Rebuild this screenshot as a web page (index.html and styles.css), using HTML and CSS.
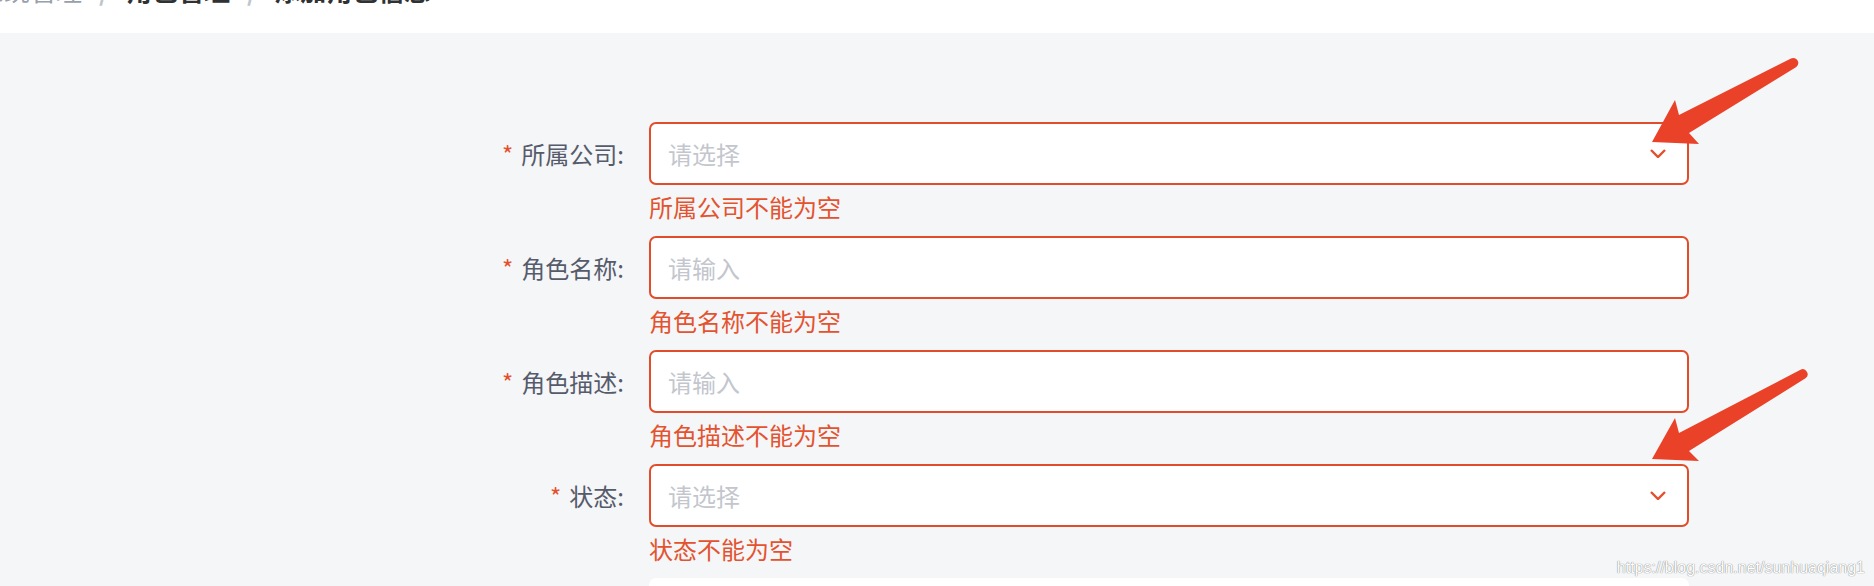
FILE: index.html
```html
<!DOCTYPE html>
<html lang="zh-CN">
<head>
    <meta charset="UTF-8">
    <meta name="viewport" content="width=device-width, initial-scale=1.0">
    <title>添加角色信息</title>
    <link rel="stylesheet" href="styles.css">
</head>

<body>
    <div class="header">
        <div class="breadcrumb">
            <span class="crumb crumb-first">系统管理</span>
            <span class="sep">/</span>
            <span class="crumb">角色管理</span>
            <span class="sep">/</span>
            <span class="crumb">添加角色信息</span>
        </div>
    </div>

    <div class="main">
        <form class="form">
            <div class="form-item">
                <label class="item-label"><span class="required">*</span>所属公司:</label>
                <div class="item-content">
                    <div class="input is-error">
                        <span class="placeholder">请选择</span>
                        <svg class="chevron" width="16" height="9" viewBox="0 0 16 9"><polyline points="1,1 8,8 15,1"/></svg>
                    </div>
                    <div class="error">所属公司不能为空</div>
                </div>
            </div>

            <div class="form-item">
                <label class="item-label"><span class="required">*</span>角色名称:</label>
                <div class="item-content">
                    <div class="input is-error">
                        <span class="placeholder">请输入</span>
                    </div>
                    <div class="error">角色名称不能为空</div>
                </div>
            </div>

            <div class="form-item">
                <label class="item-label"><span class="required">*</span>角色描述:</label>
                <div class="item-content">
                    <div class="input is-error">
                        <span class="placeholder">请输入</span>
                    </div>
                    <div class="error">角色描述不能为空</div>
                </div>
            </div>

            <div class="form-item">
                <label class="item-label"><span class="required">*</span>状态:</label>
                <div class="item-content">
                    <div class="input is-error">
                        <span class="placeholder">请选择</span>
                        <svg class="chevron" width="16" height="9" viewBox="0 0 16 9"><polyline points="1,1 8,8 15,1"/></svg>
                    </div>
                    <div class="error">状态不能为空</div>
                </div>
            </div>

            <div class="form-item">
                <label class="item-label"></label>
                <div class="item-content">
                    <div class="input blank"></div>
                </div>
            </div>
        </form>
    </div>

    <!-- hand-drawn arrows pointing at the dropdown icons -->
    <svg class="marks" width="1874" height="586" viewBox="0 0 1874 586">
        <path d="M1652 142 L1675 100 L1679 115 L1791 58.5 A5 5 0 0 1 1795.5 67.5 L1689 133 L1699 144 Z"/>
        <path d="M1652 459 L1675 418 L1679 433 L1800.5 369.7 A5 5 0 0 1 1805.5 378.3 L1689 451 L1699 461 Z"/>
    </svg>

    <div class="watermark">https://blog.csdn.net/sunhuaqiang1</div>
</body>
</html>
```

FILE: styles.css
```css
* {
    box-sizing: border-box;
    margin: 0;
    padding: 0;
}

body {
    position: relative;
    width: 1874px;
    height: 586px;
    overflow: hidden;
    background-color: #f5f6f8;
    font-family: "Noto Sans CJK SC", "Noto Sans", sans-serif;
}

.header {
    height: 33px;
    background-color: #fff;
    overflow: hidden;
}

.breadcrumb {
    display: flex;
    margin-top: -23px;
    margin-left: -22px;
    font-size: 26px;
    line-height: 26px;
    white-space: nowrap;
}

.crumb {
    color: #303133;
    font-weight: bold;
}

.crumb-first {
    color: #97a0ab;
    font-weight: normal;
}

.sep {
    margin: 0 17px;
    color: #c0c4cc;
    font-weight: bold;
}

.main {
    padding-top: 89px;
}

.form {
    width: 1264px;
    margin-left: 425px;
}

.form-item {
    display: flex;
}

.item-label {
    width: 224px;
    padding-right: 25px;
    text-align: right;
    line-height: 63px;
    font-size: 24px;
    color: #555b6b;
}

.required {
    color: #e4502c;
    margin-right: 8px;
}

.item-content {
    width: 1040px;
}

.input {
    display: flex;
    align-items: center;
    justify-content: space-between;
    height: 63px;
    padding: 0 21px 0 17px;
    background-color: #fff;
    border: 2px solid #dcdfe6;
    border-radius: 7px;
}

.input.is-error {
    border-color: #e14d2a;
}

.input.blank {
    border-color: #fff;
}

.placeholder {
    font-size: 24px;
    color: #c3c6cd;
}

.chevron polyline {
    fill: none;
    stroke: #e4502c;
    stroke-width: 2.4;
}

.error {
    height: 51px;
    line-height: 44px;
    font-size: 24px;
    color: #e4532f;
}

.marks {
    position: absolute;
    top: 0;
    left: 0;
    pointer-events: none;
}

.marks path {
    fill: #ea4228;
}

.watermark {
    position: absolute;
    top: 559px;
    right: 9px;
    font-family: "Liberation Sans", Arial, sans-serif;
    font-size: 16px;
    color: #fff;
    text-shadow: 0 0 1px rgba(0, 0, 0, 0.45), 0 0 1px rgba(0, 0, 0, 0.3);
}
```
